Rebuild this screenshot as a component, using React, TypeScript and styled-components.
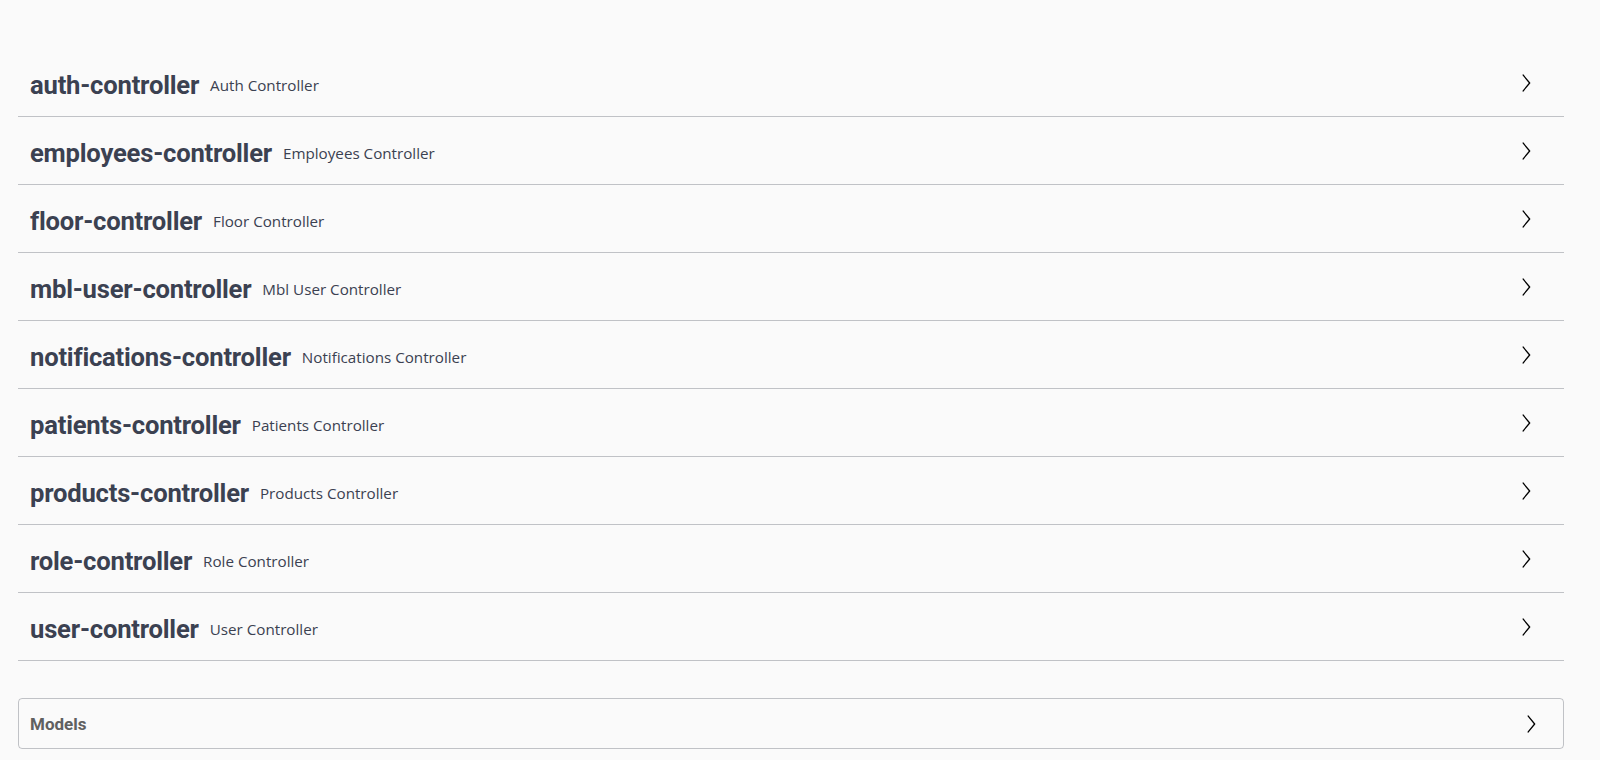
import { FC } from "react";
import styled, { createGlobalStyle } from 'styled-components';

const GlobalStyle = createGlobalStyle`
    html, body {
        margin: 0;
        padding: 0;
        background: #fafafa;
        overflow: hidden;
    }
`;

const Page = styled.div`
    min-height: 760px;
    padding: 54px 36px 0 18px;
    box-sizing: border-box;
    background: #fafafa;
    color: #3b4151;
`;

const TagList = styled.div`
    display: flex;
    flex-direction: column;
`;

const TagRow = styled.div`
    display: flex;
    align-items: center;
    height: 42px;
    padding: 10px 20px 10px 12px;
    margin: 0 0 5px;
    border-bottom: 1px solid rgba(59, 65, 81, 0.3);
    cursor: pointer;
`;

const TagName = styled.span`
    font-family: Roboto, "Liberation Sans", sans-serif;
    font-size: 25.6px;
    font-weight: 700;
    letter-spacing: -0.2px;
    color: #3b4151;
    white-space: nowrap;
`;

const TagDescription = styled.small`
    flex: 1;
    padding: 0 10px 0 11px;
    font-family: "Open Sans", "Liberation Sans", sans-serif;
    font-size: 15.2px;
    font-weight: 400;
    color: #3b4151;
`;

const Expand = styled.button<{ $lift?: number; $inset?: number }>`
    display: flex;
    align-items: center;
    padding: 0;
    margin: ${({ $lift = 0 }) => -$lift}px ${({ $inset = 0 }) => $inset}px 0 0;
    border: none;
    background: none;
    color: #000;
    cursor: pointer;
`;

const Models = styled.section`
    margin-top: 32px;
    border: 1px solid rgba(59, 65, 81, 0.3);
    border-radius: 4px;
`;

const ModelsHeader = styled.h4`
    display: flex;
    align-items: center;
    height: 29px;
    margin: 0;
    padding: 10px 20px 10px 11px;
    font-family: Roboto, "Liberation Sans", sans-serif;
    font-size: 17px;
    font-weight: 700;
    color: #606060;
    cursor: pointer;
`;

const ModelsTitle = styled.span`
    flex: 1;
`;

const Chevron: FC = () => (
    <svg width="20" height="20" viewBox="0 0 20 20" aria-hidden="true">
        <path
            fill="currentColor"
            d="M13.25 10 6.109 2.58a.697.697 0 0 1 0-.979.68.68 0 0 1 .969 0l7.83 7.908a.697.697 0 0 1 0 .979l-7.83 7.908a.68.68 0 0 1-.969 0 .697.697 0 0 1 0-.979L13.25 10z"
            transform="translate(10 10) scale(0.85 1) translate(-10 -10)"
        />
    </svg>
);

const tags = [
    { name: 'auth-controller', description: 'Auth Controller' },
    { name: 'employees-controller', description: 'Employees Controller' },
    { name: 'floor-controller', description: 'Floor Controller' },
    { name: 'mbl-user-controller', description: 'Mbl User Controller' },
    { name: 'notifications-controller', description: 'Notifications Controller' },
    { name: 'patients-controller', description: 'Patients Controller' },
    { name: 'products-controller', description: 'Products Controller' },
    { name: 'role-controller', description: 'Role Controller' },
    { name: 'user-controller', description: 'User Controller' },
];

const App: FC = () => {
    return (
        <>
            <GlobalStyle />
            <Page>
                <TagList>
                    { tags.map(tag => (
                        <TagRow key={tag.name}>
                            <TagName>{tag.name}</TagName>
                            <TagDescription>{tag.description}</TagDescription>
                            <Expand $lift={5} $inset={8}><Chevron /></Expand>
                        </TagRow>
                    ))}
                </TagList>
                <Models>
                    <ModelsHeader>
                        <ModelsTitle>Models</ModelsTitle>
                        <Expand $inset={2}><Chevron /></Expand>
                    </ModelsHeader>
                </Models>
            </Page>
        </>
    )
}

export default App;
